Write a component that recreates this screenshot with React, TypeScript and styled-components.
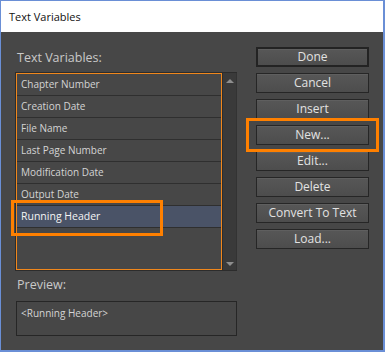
import React from "react";
import styled, { createGlobalStyle, css } from "styled-components";

const GlobalStyle = createGlobalStyle`
  html, body {
    margin: 0;
    padding: 0;
    background: #ffffff;
  }
  body {
    font-family: "Open Sans", "Noto Sans", sans-serif;
  }
`;

const Window = styled.div`
  position: relative;
  width: 385px;
  height: 352px;
  box-sizing: border-box;
  border-style: solid;
  border-color: #6a8fd6;
  border-width: 1px 2px 2px 1px;
  display: flex;
  flex-direction: column;
  background: #474747;
`;

const TitleBar = styled.div`
  height: 31px;
  flex: none;
  background: #ffffff;
  color: #111;
  font-size: 11px;
  line-height: 31px;
  padding-left: 8px;
`;

const Body = styled.div`
  flex: 1;
  display: flex;
  justify-content: space-between;
  padding: 15px 14px 0 14px;
`;

const LeftColumn = styled.div`
  width: 222px;
  display: flex;
  flex-direction: column;
`;

const Label = styled.div<{ $gap?: number; $below?: number }>`
  color: #c9c9c9;
  font-size: 12.5px;
  line-height: 16px;
  padding-left: 2px;
  margin-top: ${(p) => p.$gap ?? 0}px;
  margin-bottom: ${(p) => p.$below ?? 6}px;
`;

const ListFrame = styled.div`
  display: flex;
  height: 199px;
  border: 1px solid #2c2c2c;
  border-right: none;
  box-sizing: border-box;
`;

const Items = styled.div`
  flex: 1;
  border: 1px solid #f0871c;
  background: #474747;
`;

const Row = styled.div<{ $selected?: boolean }>`
  height: 21px;
  border-bottom: 1px solid #2f2f2f;
  padding-left: 4px;
  font-size: 10px;
  line-height: 21px;
  color: #d4d4d4;
  ${(p) =>
    p.$selected &&
    css`
      background: #4a5367;
      color: #f4f4f4;
      font-size: 10.5px;
    `}
`;

const Scrollbar = styled.div`
  width: 13px;
  background: #3a3a3a;
  border-left: 1px solid #2c2c2c;
  border-right: 1px solid #333;
  display: flex;
  flex-direction: column;
  justify-content: space-between;
  align-items: center;
  padding: 6px 0 4px;
`;

const Arrow = styled.div<{ $down?: boolean }>`
  width: 0;
  height: 0;
  border-left: 4px solid transparent;
  border-right: 4px solid transparent;
  ${(p) =>
    p.$down
      ? css`
          border-top: 4px solid #8e8e8e;
        `
      : css`
          border-bottom: 4px solid #8e8e8e;
        `}
`;

const PreviewBox = styled.div`
  height: 35px;
  box-sizing: border-box;
  border: 1px solid #262626;
  padding: 4px 4px;
  color: #d4d4d4;
  font-size: 10px;
  line-height: 14px;
  margin-left: 1px;
`;

const ButtonColumn = styled.div`
  width: 113px;
  display: flex;
  flex-direction: column;
  gap: 6px;
`;

const Button = styled.div<{ $default?: boolean }>`
  height: 20px;
  box-sizing: border-box;
  border: 1px solid #262626;
  background: linear-gradient(#575757, #4d4d4d);
  color: #e2e2e2;
  font-size: 12px;
  line-height: 18px;
  text-align: center;
  box-shadow: inset 0 1px 0 #5f5f5f;
  ${(p) =>
    p.$default &&
    css`
      border: 2px solid #232323;
      line-height: 16px;
    `}
`;

const Highlight = styled.div<{ $x: number; $y: number; $w: number; $h: number }>`
  position: absolute;
  left: ${(p) => p.$x}px;
  top: ${(p) => p.$y}px;
  width: ${(p) => p.$w}px;
  height: ${(p) => p.$h}px;
  box-sizing: border-box;
  border: 3px solid #ff8000;
  pointer-events: none;
`;

const variables = [
  "Chapter Number",
  "Creation Date",
  "File Name",
  "Last Page Number",
  "Modification Date",
  "Output Date",
  "Running Header",
];

const buttons = ["Done", "Cancel", "Insert", "New...", "Edit...", "Delete", "Convert To Text", "Load..."];

export default function App() {
  return (
    <>
      <GlobalStyle />
      <Window>
        <TitleBar>Text Variables</TitleBar>
        <Body>
          <LeftColumn>
            <Label $gap={3}>Text Variables:</Label>
            <ListFrame>
              <Items>
                {variables.map((v) => (
                  <Row key={v} $selected={v === "Running Header"}>
                    {v}
                  </Row>
                ))}
              </Items>
              <Scrollbar>
                <Arrow />
                <Arrow $down />
              </Scrollbar>
            </ListFrame>
            <Label $gap={6} $below={8}>
              Preview:
            </Label>
            <PreviewBox>&lt;Running Header&gt;</PreviewBox>
          </LeftColumn>
          <ButtonColumn>
            {buttons.map((b) => (
              <Button key={b} $default={b === "Done"}>
                {b}
              </Button>
            ))}
          </ButtonColumn>
        </Body>
        <Highlight $x={10} $y={199} $w={152} $h={36} />
        <Highlight $x={245} $y={117} $w={133} $h={34} />
      </Window>
    </>
  );
}
